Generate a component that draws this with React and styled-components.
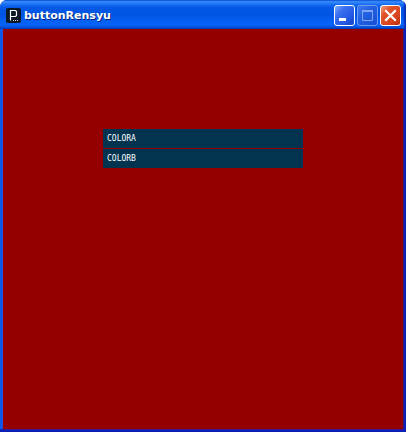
import React from "react";
import styled, { createGlobalStyle } from "styled-components";

const GlobalStyle = createGlobalStyle`
  * {
    box-sizing: border-box;
  }

  body {
    margin: 0;
    background: #ffffff;
  }
`;

const Window = styled.div`
  display: flex;
  flex-direction: column;
  min-height: 100vh;
  border-radius: 7px 7px 0 0;
  overflow: hidden;
  background: #0a1fb4;
`;

const TitleBar = styled.header`
  display: flex;
  align-items: center;
  gap: 3px;
  height: 29px;
  padding: 2px 5px 0 6px;
  background: linear-gradient(
    to bottom,
    #0a50d8 0%,
    #3a8dfb 6%,
    #1a72f4 14%,
    #0559e6 26%,
    #0054e3 50%,
    #0560f2 72%,
    #0664fa 86%,
    #0450d8 94%,
    #0238b0 100%
  );
  box-shadow: inset -2px 0 1px #0830b8;
`;

const Title = styled.h1`
  flex: 1;
  margin: 0;
  color: #ffffff;
  font-family: "DejaVu Sans", "Liberation Sans", sans-serif;
  font-size: 11px;
  font-weight: 700;
  line-height: 16px;
  text-shadow: 1px 1px 0 #0a2a80;
`;

const WindowButtons = styled.div`
  display: flex;
  gap: 2px;
`;

const WindowButton = styled.button`
  display: flex;
  width: 21px;
  height: 21px;
  padding: 0;
  border: 1px solid ${(props) => (props.disabled ? "#6f9bee" : "#ffffff")};
  border-radius: 3px;
  background: ${(props) =>
    props.$close
      ? "linear-gradient(135deg, #f0a080 0%, #e0532c 30%, #d8431c 70%, #b8300c 100%)"
      : props.disabled
        ? "linear-gradient(135deg, #3f7df0 0%, #2361e2 40%, #1450d4 100%)"
        : "linear-gradient(135deg, #7ea8f8 0%, #3a6ff0 30%, #2358e4 70%, #1244c4 100%)"};
`;

const Canvas = styled.main`
  flex: 1;
  margin: 0 3px 3px;
  padding-top: 100px;
  background: #940000;
  box-shadow: -1px 0 0 #2a50d8, -3px 0 0 #0a58ee, 0 1px 0 #3a1c90, 1px 0 0 #3a1c90;
`;

const ButtonList = styled.div`
  display: flex;
  flex-direction: column;
  gap: 1px;
  width: 50%;
  margin: 0 auto;
`;

const ColorButton = styled.button`
  height: 19px;
  padding: 1px 4px 0;
  border: none;
  background: #023450;
  color: #ffffff;
  font-family: "DejaVu Sans Mono", "Liberation Mono", monospace;
  font-size: 8px;
  line-height: 18px;
  text-align: left;
`;

const colors = ["COLORA", "COLORB"];

function AppIcon() {
  return (
    <svg width="15" height="15" viewBox="0 0 15 15" aria-hidden="true">
      <rect width="15" height="15" rx="2" fill="#0b1826" />
      <path d="M4.5 12.5V2.5H9.5L10.5 3.5V7.5L9.5 8.5H5" fill="none" stroke="#ffffff" strokeWidth="1.2" />
      <path d="M7 12.5h1M9 12.5h1M11 12.5h1" stroke="#d4dce4" />
    </svg>
  );
}

function App() {
  return (
    <>
      <GlobalStyle />
      <Window>
        <TitleBar>
          <AppIcon />
          <Title>buttonRensyu</Title>
          <WindowButtons>
            <WindowButton aria-label="Minimize">
              <svg width="19" height="19" viewBox="0 0 19 19">
                <path d="M4 13.5h7" stroke="#ffffff" strokeWidth="3" />
              </svg>
            </WindowButton>
            <WindowButton aria-label="Maximize" disabled>
              <svg width="19" height="19" viewBox="0 0 19 19">
                <path d="M4.5 5v9.5h10V5" fill="none" stroke="#7fa4f0" />
                <path d="M4 5h11" stroke="#7fa4f0" strokeWidth="2" />
              </svg>
            </WindowButton>
            <WindowButton aria-label="Close" $close>
              <svg width="19" height="19" viewBox="0 0 19 19">
                <path d="M5 5l9 9M14 5l-9 9" stroke="#ffffff" strokeWidth="2.2" strokeLinecap="square" />
              </svg>
            </WindowButton>
          </WindowButtons>
        </TitleBar>
        <Canvas>
          <ButtonList>
            {colors.map((color) => (
              <ColorButton key={color}>{color}</ColorButton>
            ))}
          </ButtonList>
        </Canvas>
      </Window>
    </>
  );
}

export default App;
